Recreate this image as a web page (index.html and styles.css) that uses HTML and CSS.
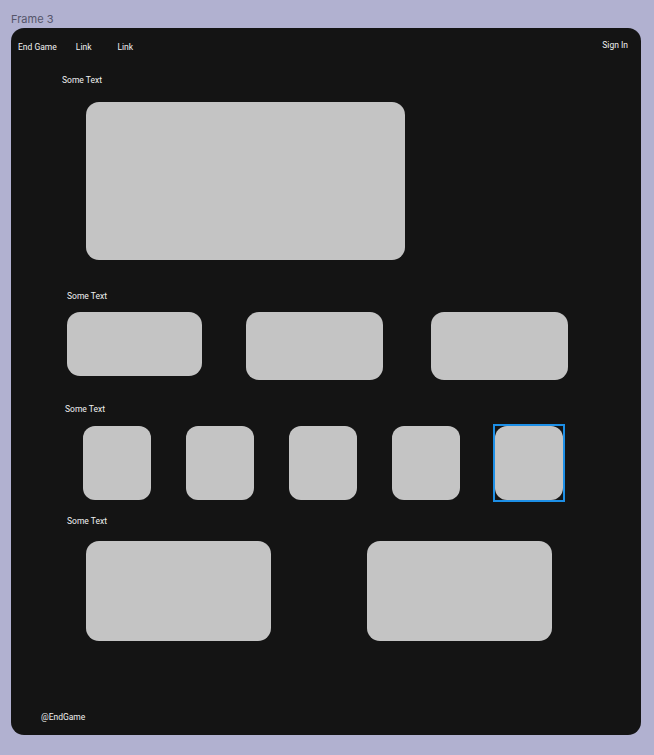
FILE: index.html
```html
<!DOCTYPE html>
<html lang="en">
<head>
    <meta charset="UTF-8">
    <meta name="viewport" content="width=device-width, initial-scale=1.0">
    <title>End Game</title>
    <link rel="stylesheet" href="styles.css">
</head>
<body>
    <p class="frame-label">Frame 3</p>
    <div class="frame">
        <nav class="nav">
            <div class="nav-left">
                <a class="brand">End Game</a>
                <a class="nav-link">Link</a>
                <a class="nav-link">Link</a>
            </div>
            <a class="sign-in">Sign In</a>
        </nav>

        <section class="hero">
            <p class="label">Some Text</p>
            <div class="card card-hero"></div>
        </section>

        <section class="row-wide">
            <p class="label">Some Text</p>
            <div class="cards">
                <div class="card card-a"></div>
                <div class="card card-b"></div>
                <div class="card card-c"></div>
            </div>
        </section>

        <section class="row-squares">
            <p class="label">Some Text</p>
            <div class="cards">
                <div class="card square"></div>
                <div class="card square"></div>
                <div class="card square"></div>
                <div class="card square"></div>
                <div class="card square selected"></div>
            </div>
        </section>

        <section class="row-pair">
            <p class="label">Some Text</p>
            <div class="cards">
                <div class="card pair"></div>
                <div class="card pair"></div>
            </div>
        </section>

        <footer class="footer">@EndGame</footer>
    </div>
</body>
</html>
```

FILE: styles.css
```css
body {
    margin: 0;
    padding: 12px 13px 0 11px;
    background: #b1b1d0;
    font-family: Roboto, "Noto Sans", sans-serif;
}
.frame-label {
    margin: 0;
    font-family: Inter, sans-serif;
    font-size: 11px;
    line-height: 15px;
    color: #55556a;
}
.frame {
    margin-top: 1px;
    width: 630px;
    height: 707px;
    box-sizing: border-box;
    background: #141414;
    border-radius: 13px;
    display: flex;
    flex-direction: column;
    color: #f0f0f0;
    font-size: 8.5px;
    line-height: 12px;
}
.nav {
    display: flex;
    justify-content: space-between;
    align-items: flex-start;
    padding: 13px 13px 0 7px;
}
.nav-left {
    display: flex;
}
.nav a {
    color: #f0f0f0;
}
.brand {
    margin-right: 19px;
}
.nav-link {
    margin-right: 26px;
}
.sign-in {
    margin-top: -2px;
}
.label {
    margin: 0;
}
.card {
    background: #c4c4c4;
    border-radius: 13px;
}
.cards {
    display: flex;
    align-items: flex-start;
}

.hero {
    margin-top: 21px;
    padding-left: 51px;
}
.card-hero {
    margin: 16px 0 0 24px;
    width: 319px;
    height: 158px;
}

.row-wide {
    margin-top: 30px;
    padding-left: 56px;
}
.row-wide .cards {
    margin-top: 10px;
}
.card-a {
    width: 135px;
    height: 64px;
}
.card-b {
    width: 137px;
    height: 68px;
    margin-left: 44px;
}
.card-c {
    width: 137px;
    height: 68px;
    margin-left: 48px;
}

.row-squares {
    margin-top: 23px;
    padding-left: 54px;
}
.row-squares .cards {
    margin: 11px 0 0 18px;
    gap: 35px;
}
.square {
    width: 68px;
    height: 74px;
    border-radius: 12px;
}
.selected {
    position: relative;
}
.selected::after {
    content: "";
    position: absolute;
    inset: -2px;
    border: 2px solid #1d8fe6;
}

.row-pair {
    margin-top: 15px;
    padding-left: 56px;
}
.row-pair .cards {
    margin: 14px 0 0 19px;
    gap: 96px;
}
.pair {
    width: 185px;
    height: 100px;
}

.footer {
    margin-top: auto;
    padding: 0 0 12px 30px;
}
```
